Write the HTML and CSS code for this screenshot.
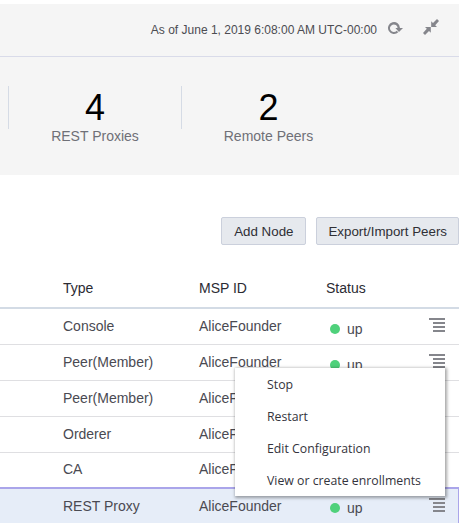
FILE: index.html
```html
<!DOCTYPE html>
<html lang="en">
<head>
<meta charset="utf-8">
<title>Nodes</title>
<link rel="stylesheet" href="styles.css">
</head>
<body>
<div class="page">
  <section class="summary">
    <div class="toolbar">
      <span class="asof">As of June 1, 2019 6:08:00 AM UTC-00:00</span>
      <svg class="icon refresh" viewBox="0 0 16 14" width="16" height="14"><path d="M13 7A6 6 0 1 0 11.300 11.200L9.700 9.700A3.800 3.800 0 1 1 10.600 7H8.400L12 11 16 7z"/></svg>
      <svg class="icon collapse" viewBox="0 0 18 18" width="18" height="18"><path d="M17 3 15 1l-4 4L9.200 3.200V9h5.800l-1.800-1.800zM1 15 3 17l4-4 1.800 1.800V9H3l1.800 1.800z"/></svg>
    </div>
    <div class="stats">
      <div class="stat"><div class="num">4</div><div class="label">REST Proxies</div></div>
      <div class="stat wide"><div class="num">2</div><div class="label">Remote Peers</div></div>
    </div>
  </section>
  <div class="actions">
    <button class="btn">Add Node</button>
    <button class="btn narrow">Export/Import Peers</button>
  </div>
  <div class="table">
    <div class="row head"><span>Type</span><span>MSP ID</span><span>Status</span><span></span></div>
    <div class="row"><span>Console</span><span>AliceFounder</span><span class="status"><i class="dot"></i><span class="state">up</span></span><span class="menu"><i></i><i></i><i></i><i></i></span></div>
    <div class="row"><span>Peer(Member)</span><span>AliceFounder</span><span class="status"><i class="dot"></i><span class="state">up</span></span><span class="menu"><i></i><i></i><i></i><i></i></span></div>
    <div class="row"><span>Peer(Member)</span><span>AliceFounder</span><span class="status"><i class="dot"></i><span class="state">up</span></span><span class="menu"><i></i><i></i><i></i><i></i></span></div>
    <div class="row"><span>Orderer</span><span>AliceFounder</span><span class="status"><i class="dot"></i><span class="state">up</span></span><span class="menu"><i></i><i></i><i></i><i></i></span></div>
    <div class="row before-selected"><span>CA</span><span>AliceFounder</span><span class="status"><i class="dot"></i><span class="state">up</span></span><span class="menu"><i></i><i></i><i></i><i></i></span></div>
    <div class="row selected"><span>REST Proxy</span><span>AliceFounder</span><span class="status"><i class="dot"></i><span class="state">up</span></span><span class="menu"><i></i><i></i><i></i><i></i></span></div>
  </div>
  <ul class="popup">
    <li>Stop</li>
    <li>Restart</li>
    <li>Edit Configuration</li>
    <li>View or create enrollments</li>
  </ul>
</div>
</body>
</html>
```
FILE: styles.css
```css
* { box-sizing: border-box; }
html, body { margin: 0; height: 100%; overflow: hidden; background: #fff; }
body { font-family: "Liberation Sans", Arial, sans-serif; font-size: 14px; color: #3c3c46; }
.page { position: relative; width: 459px; height: 523px; overflow: hidden; padding-top: 4px; }
.summary { height: 171px; background: #f5f5f5; }
.toolbar { height: 53px; border-bottom: 1px solid #d9dbe9; display: flex; align-items: center; justify-content: flex-end; padding-right: 19px; }
.asof { font-size: 12px; color: #4c4c52; margin-right: 10px; }
.icon { fill: #85868c; flex: none; }
.refresh { margin-right: 19px; margin-top: -5px; }
.collapse { margin-top: -6px; }
.stats { display: flex; padding-top: 29px; padding-left: 8px; }
.stat { width: 173px; height: 43px; border-left: 1px solid #d5dbe5; text-align: center; }
.wide { width: 174px; }
.num { font-size: 36px; line-height: 42px; color: #000; padding-top: 1px; }
.label { font-size: 14px; line-height: 16px; color: #6f7077; margin-top: -1px; }
.actions { display: flex; justify-content: flex-end; gap: 10px; margin-top: 42px; height: 28px; }
.btn { height: 28px; padding: 0 12px; font: 13.33px "Liberation Sans", Arial, sans-serif; color: #2f2f35; background: #e6e9ee; border: 1px solid #cbd0dc; border-radius: 2px; }
.narrow { padding: 0 11px; }
.table { margin-top: 26px; }
.row { display: grid; grid-template-columns: 136px 127px 99px 1fr; height: 36px; padding-left: 63px; padding-bottom: 2px; align-items: center; border-bottom: 1px solid #dfdfe2; color: #4a4a52; }
.head { height: 38px; border-bottom: 2px solid #d3dbe5; color: #2b2b33; padding-bottom: 2px; }
.before-selected { border-bottom: 2px solid #aaa5ea; }
.selected { background: #e6edf8; border: 0; border-right: 1px solid #aaa5ea; }
.status { display: flex; align-items: center; gap: 7px; padding-left: 4px; }
.state { position: relative; top: 3px; }
.dot { width: 10px; height: 10px; border-radius: 50%; background: #4fd17b; flex: none; position: relative; top: 3px; }
.selected .state, .selected .dot { top: 2px; }
.menu { display: flex; flex-direction: column; align-items: flex-end; justify-self: end; width: 16px; gap: 2px; margin-right: 14px; margin-top: -1px; }
.selected .menu { margin-top: -3px; margin-right: 13px; }
.menu i { display: block; height: 2px; width: 12px; background: #85868c; }
.menu i:first-child { width: 16px; }
.popup { position: absolute; left: 235px; top: 368px; width: 210px; height: 128px; margin: 0; padding: 0; list-style: none; background: #fff; box-shadow: 1px 1px 3px 1px rgba(0,0,0,.35); font-family: "Open Sans", sans-serif; font-size: 12.3px; color: #34343c; }
.popup li { height: 32px; line-height: 32px; padding-left: 32px; position: relative; top: 1px; }
```
